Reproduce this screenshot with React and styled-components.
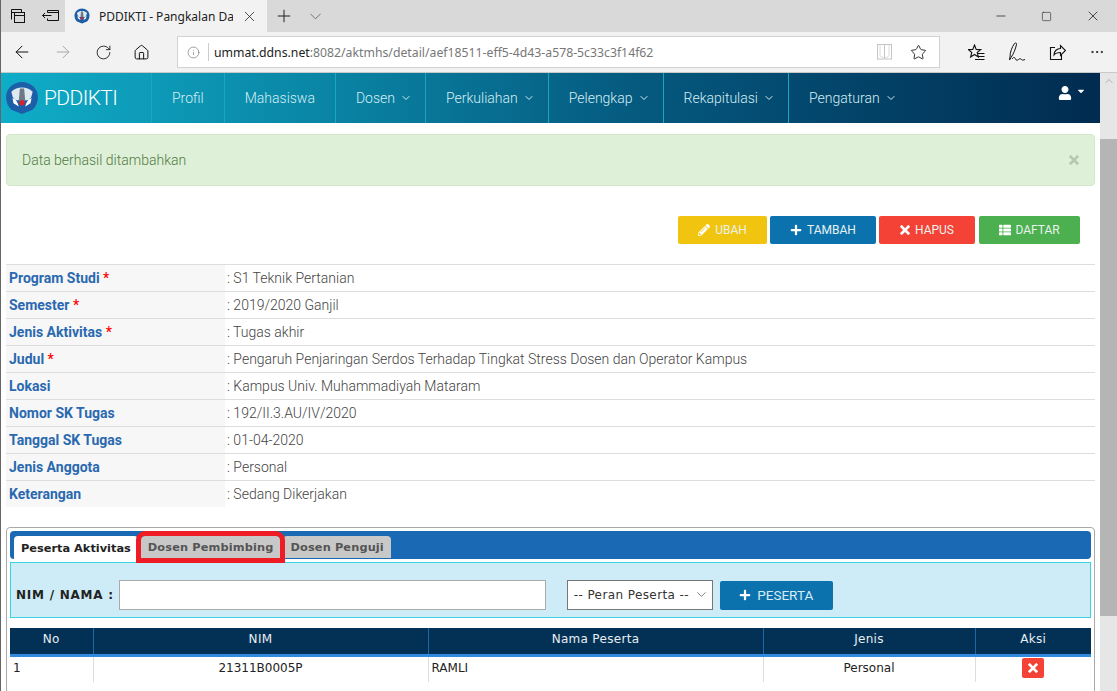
import React from 'react'
import styled, { createGlobalStyle } from 'styled-components'
import { FaPencilAlt, FaPlus, FaThList, FaUser, FaCaretDown } from 'react-icons/fa'
import { ImCross } from 'react-icons/im'
import {
  ArrowLeft, ArrowRight, RotateCw, Home, Info, X, Plus, ChevronDown, ChevronUp,
  Minus, Square, Star, MoreHorizontal,
} from 'lucide-react'

const GlobalStyle = createGlobalStyle`
  html, body { margin: 0; padding: 0; height: 691px; overflow: hidden; background: #fff; }
  * { box-sizing: border-box; }
`

const rows = [
  { label: 'Program Studi', req: true, value: 'S1 Teknik Pertanian' },
  { label: 'Semester', req: true, value: '2019/2020 Ganjil' },
  { label: 'Jenis Aktivitas', req: true, value: 'Tugas akhir' },
  { label: 'Judul', req: true, value: 'Pengaruh Penjaringan Serdos Terhadap Tingkat Stress Dosen dan Operator Kampus' },
  { label: 'Lokasi', value: 'Kampus Univ. Muhammadiyah Mataram' },
  { label: 'Nomor SK Tugas', value: '192/II.3.AU/IV/2020' },
  { label: 'Tanggal SK Tugas', value: '01-04-2020' },
  { label: 'Jenis Anggota', value: 'Personal' },
  { label: 'Keterangan', value: 'Sedang Dikerjakan' },
]

const menus = [
  { name: 'Profil' },
  { name: 'Mahasiswa' },
  { name: 'Dosen', drop: true },
  { name: 'Perkuliahan', drop: true },
  { name: 'Pelengkap', drop: true },
  { name: 'Rekapitulasi', drop: true },
  { name: 'Pengaturan', drop: true },
]

const Logo = ({ size }) => (
  <svg width={size} height={size} viewBox="0 0 32 32">
    <path d="M16 1c8 0 15 6 15 14 0 5-2 9-5 12l-10 4-10-4c-3-3-5-7-5-12C1 7 8 1 16 1z" fill="#1c5fa8" />
    <path d="M6 10c3-3 6-4 10-4s7 1 10 4l-2 8H8z" fill="#dfe9f1" />
    <path d="M3 14c4 0 7 3 9 8l4 3 4-3c2-5 5-8 9-8l-2 9-7 5H12l-7-5z" fill="#1c5fa8" />
    <path d="M7 16c3 1 5 4 6 8l-5-3zM25 16c-3 1-5 4-6 8l5-3z" fill="#fff" />
    <path d="M14 7h4l1 11h-6z" fill="#6d7a86" />
    <circle cx="16" cy="20.5" r="2.6" fill="#d8232a" />
  </svg>
)

const TabsIcon = () => (
  <svg width="16" height="16" viewBox="0 0 16 16" fill="none" stroke="#111" strokeWidth="1">
    <path d="M1.5 11.5v-10h10v3" />
    <path d="M1.5 4.5h3" />
    <rect x="4.5" y="4.5" width="10" height="10" />
    <path d="M4.5 7.5h10" />
  </svg>
)

const AsideIcon = () => (
  <svg width="17" height="14" viewBox="0 0 17 14" fill="none" stroke="#111" strokeWidth="1">
    <path d="M5.5 3.5v-2h11v10h-11v-2" />
    <path d="M5.5 3.5h11" />
    <path d="M0.5 6.5h9M3 4l-2.5 2.5L3 9" />
  </svg>
)

const BookIcon = () => (
  <svg width="15" height="16" viewBox="0 0 15 16" fill="none" stroke="#c4c4c4" strokeWidth="1">
    <rect x="0.5" y="0.5" width="14" height="14.5" />
    <path d="M7.5 0.5v14.5" />
    <path d="M3 0.5v11.500l4.500 2.500l4.500-2.500v-11.500" stroke="#dcdcdc" />
  </svg>
)

const FavoritesIcon = () => (
  <svg width="17" height="17" viewBox="0 0 17 17" fill="none" stroke="#111" strokeWidth="1.1">
    <path d="M6.500 1l1.700 4.400 4.500.2-3.500 2.900 1.200 4.500-3.900-2.500L2.600 13l1.200-4.500L.3 5.600l4.500-.2z" />
    <path d="M10 9.500h6.500M10 12.500h6.500M7 15.500h9.500" />
  </svg>
)

const PenIcon = () => (
  <svg width="18" height="20" viewBox="0 0 18 20" fill="none" stroke="#111" strokeWidth="1">
    <path d="M2 15c0-5 2-10 4.500-13.500 1-1 2.500-.5 2 1C7.500 7 5.500 12 3 15.500L1.500 18z" />
    <path d="M4 17c2-2.500 3-1.500 3.500 0s2 1.500 3 .5 2-1 3 0 2 .5 3.500 0" />
  </svg>
)

const ShareIcon = () => (
  <svg width="17" height="17" viewBox="0 0 17 17" fill="none" stroke="#111" strokeWidth="1.1">
    <path d="M6 3.500H1.500v12h11V11" />
    <path d="M5 11c0-4 3-6.500 6.500-6.500V1.500l5 5-5 5V8.500C9 8.500 6.500 9 5 11z" />
  </svg>
)

function App() {
  return (
    <Window>
      <GlobalStyle />
      <TabStrip>
        <StripIcon $w={34}><TabsIcon /></StripIcon>
        <StripIcon $w={30}><AsideIcon /></StripIcon>
        <BrowserTab>
          <Logo size={16} />
          <TabTitle>PDDIKTI - Pangkalan Da</TabTitle>
          <X size={17} strokeWidth={1.1} />
        </BrowserTab>
        <StripIcon $w={34}><Plus size={20} strokeWidth={1.1} /></StripIcon>
        <StripIcon $w={28}><ChevronDown size={19} strokeWidth={1} color="#555" /></StripIcon>
        <WindowControls>
          <Minus size={14} strokeWidth={1.2} />
          <Square size={11} strokeWidth={1.2} />
          <X size={16} strokeWidth={1.1} />
        </WindowControls>
      </TabStrip>

      <Toolbar>
        <NavIcons>
          <ArrowLeft size={20} strokeWidth={1.2} />
          <ArrowRight size={20} strokeWidth={1.2} color="#a8a8a8" />
          <RotateCw size={17} strokeWidth={1.2} />
          <Home size={17} strokeWidth={1.4} />
        </NavIcons>
        <Address>
          <Info size={13} strokeWidth={1.3} color="#777" />
          <AddressRule />
          <Url><b>ummat.ddns.net</b>:8082/aktmhs/detail/aef18511-eff5-4d43-a578-5c33c3f14f62</Url>
          <AddressEnd>
            <BookIcon />
            <Star size={17} strokeWidth={1.3} color="#222" />
          </AddressEnd>
        </Address>
        <ToolIcons>
          <FavoritesIcon />
          <PenIcon />
          <ShareIcon />
          <MoreHorizontal size={16} strokeWidth={1.3} />
        </ToolIcons>
      </Toolbar>

      <Viewport>
        <Page>
          <Navbar>
            <Brand>
              <Logo size={34} />
              <BrandName>PDDIKTI</BrandName>
            </Brand>
            {menus.map((m) => (
              <MenuItem key={m.name} $drop={m.drop}>
                {m.name}
                {m.drop && <ChevronDown size={12} strokeWidth={2} />}
              </MenuItem>
            ))}
            <UserMenu>
              <FaUser size={14} />
              <FaCaretDown size={10} />
            </UserMenu>
          </Navbar>

          <Content>
            <Alert>
              Data berhasil ditambahkan
              <ImCross size={10} color="#b8c6b2" />
            </Alert>

            <Actions>
              <ActionButton $bg="#f1c40f" $w={89}><FaPencilAlt size={12} />UBAH</ActionButton>
              <ActionButton $bg="#0b72ae" $w={106}><FaPlus size={12} />TAMBAH</ActionButton>
              <ActionButton $bg="#f44336" $w={96}><ImCross size={10} />HAPUS</ActionButton>
              <ActionButton $bg="#4caf50" $w={101} $gap={4}><FaThList size={12} />DAFTAR</ActionButton>
            </Actions>

            <Detail>
              {rows.map((r) => (
                <DetailRow key={r.label}>
                  <DetailLabel>
                    {r.label}
                    {r.req && <Req> *</Req>}
                  </DetailLabel>
                  <DetailValue>: {r.value}</DetailValue>
                </DetailRow>
              ))}
            </Detail>

            <Panel>
              <TabBar>
                <PanelTab $active>Peserta Aktivitas</PanelTab>
                <PanelTab $marked>Dosen Pembimbing</PanelTab>
                <PanelTab>Dosen Penguji</PanelTab>
              </TabBar>

              <Filter>
                <FilterLabel>NIM / NAMA :</FilterLabel>
                <SearchInput />
                <RoleSelect>
                  -- Peran Peserta --
                  <ChevronDown size={15} strokeWidth={1} />
                </RoleSelect>
                <AddButton><FaPlus size={12} />PESERTA</AddButton>
              </Filter>

              <Table>
                <thead>
                  <tr>
                    <Th $w={83}>No</Th>
                    <Th $w={335}>NIM</Th>
                    <Th $w={335}>Nama Peserta</Th>
                    <Th $w={212}>Jenis</Th>
                    <Th $w={116}>Aksi</Th>
                  </tr>
                </thead>
                <tbody>
                  <tr>
                    <Td>1</Td>
                    <Td $center>21311B0005P</Td>
                    <Td>RAMLI</Td>
                    <Td $center>Personal</Td>
                    <Td $center><DeleteButton><ImCross size={10} /></DeleteButton></Td>
                  </tr>
                </tbody>
              </Table>
            </Panel>
          </Content>
        </Page>

        <Scrollbar>
          <ScrollArrow><ChevronUp size={12} strokeWidth={1} /></ScrollArrow>
          <ScrollThumb />
        </Scrollbar>
      </Viewport>
    </Window>
  )
}

export default App

const Window = styled.div`
  width: 1117px;
  height: 691px;
  display: flex;
  flex-direction: column;
  overflow: hidden;
  border-left: 1px solid #666;
  font-family: Roboto, sans-serif;
`

const TabStrip = styled.div`
  height: 32px;
  flex: none;
  display: flex;
  align-items: center;
  background: #d9d9d9;
  color: #111;
`

const StripIcon = styled.div`
  width: ${(p) => p.$w}px;
  height: 32px;
  flex: none;
  display: flex;
  align-items: center;
  justify-content: center;
`

const BrowserTab = styled.div`
  width: 202px;
  height: 32px;
  flex: none;
  display: flex;
  align-items: center;
  padding: 0 9px;
  background: #f2f2f2;
  color: #222;
`

const TabTitle = styled.span`
  width: 134px;
  margin: 0 8px 0 9px;
  overflow: hidden;
  white-space: nowrap;
  font: 12px "Noto Sans", sans-serif;
`

const WindowControls = styled.div`
  margin-left: auto;
  width: 138px;
  padding: 0 16px 0 15px;
  display: flex;
  align-items: center;
  justify-content: space-between;
`

const Toolbar = styled.div`
  height: 41px;
  flex: none;
  display: flex;
  align-items: center;
  background: #f2f2f2;
  border-bottom: 1px solid #c9c9c9;
  color: #111;
`

const NavIcons = styled.div`
  width: 176px;
  flex: none;
  padding: 0 27px 0 11px;
  display: flex;
  align-items: center;
  justify-content: space-between;
`

const Address = styled.div`
  width: 763px;
  height: 32px;
  flex: none;
  display: flex;
  align-items: center;
  padding: 0 12px 0 9px;
  background: #fff;
  border: 1px solid #d2d2d2;
`

const AddressRule = styled.div`
  width: 1px;
  height: 18px;
  margin: 0 5px 0 8px;
  background: #ccc;
`

const Url = styled.span`
  font: 12.25px "Noto Sans", sans-serif;
  color: #777;
  white-space: nowrap;

  b {
    font-weight: 400;
    color: #222;
  }
`

const AddressEnd = styled.div`
  margin-left: auto;
  width: 50px;
  display: flex;
  align-items: center;
  justify-content: space-between;
`

const ToolIcons = styled.div`
  flex: 1;
  padding: 0 12px 0 28px;
  display: flex;
  align-items: center;
  justify-content: space-between;
`

const Viewport = styled.div`
  flex: 1;
  min-height: 0;
  display: flex;
`

const Page = styled.div`
  width: 1099px;
  flex: none;
  overflow: hidden;
`

const Navbar = styled.nav`
  height: 50px;
  display: flex;
  align-items: stretch;
  background: linear-gradient(90deg, #0fadc8 0%, #0a84a4 30%, #05597f 58%, #012b50 100%);
  color: #d4eef4;
`

const Brand = styled.div`
  width: 150px;
  flex: none;
  display: flex;
  align-items: center;
  padding-left: 4px;
  gap: 5px;
`

const BrandName = styled.span`
  font: 300 21px Roboto, sans-serif;
  letter-spacing: -0.6px;
  color: #fff;
`

const MenuItem = styled.div`
  display: flex;
  align-items: center;
  gap: 5px;
  padding: 0 ${(p) => (p.$drop ? 13 : 20)}px 0 20px;
  border-left: 1px solid #18a6c4;
  font: 300 14px Roboto, sans-serif;
  white-space: nowrap;
`

const UserMenu = styled.div`
  margin-left: auto;
  display: flex;
  align-items: flex-start;
  gap: 4px;
  padding: 13px 14px 0 0;
  color: #fff;
`

const Content = styled.main`
  padding: 11px 5px 0 5px;
`

const Alert = styled.div`
  height: 52px;
  display: flex;
  align-items: center;
  justify-content: space-between;
  padding: 0 15px 0 15px;
  background: #dff0d8;
  border: 1px solid #d2e7c8;
  border-radius: 4px;
  color: #4f7a42;
  font-size: 14px;
  font-weight: 300;
`

const Actions = styled.div`
  display: flex;
  justify-content: flex-end;
  gap: 3px;
  margin-top: 30px;
  padding-right: 15px;
`

const ActionButton = styled.div`
  width: ${(p) => p.$w}px;
  height: 28px;
  margin-left: ${(p) => (p.$gap ? 1 : 0)}px;
  display: flex;
  align-items: center;
  justify-content: center;
  gap: ${(p) => p.$gap || 5}px;
  border-radius: 2px;
  background: ${(p) => p.$bg};
  color: #e8f2ee;
  font-size: 12px;

  svg {
    color: #fff;
  }
`

const Detail = styled.div`
  margin-top: 20px;
  border-top: 1px solid #ddd;
`

const DetailRow = styled.div`
  height: 27px;
  display: flex;
  border-bottom: 1px solid #ddd;

  &:last-child {
    border-bottom-color: transparent;
  }
`

const DetailLabel = styled.div`
  width: 219px;
  flex: none;
  display: flex;
  align-items: center;
  padding-left: 3px;
  background: #f7f7f7;
  color: #2a69b0;
  font-size: 14px;
  font-weight: 700;
  white-space: pre;
`

const Req = styled.span`
  color: #f00;
  font-weight: 500;
`

const DetailValue = styled.div`
  display: flex;
  align-items: center;
  padding-left: 2px;
  color: #444;
  font-size: 14px;
  font-weight: 300;
  white-space: pre;
`

const Panel = styled.section`
  margin-top: 19px;
  padding: 3px;
  height: 170px;
  border: 1px solid #aaa;
  border-radius: 4px;
  font-family: "DejaVu Sans", sans-serif;
`

const TabBar = styled.div`
  height: 28px;
  display: flex;
  align-items: flex-end;
  gap: 3px;
  padding: 0 0 0 4px;
  background: #1a69b5;
  border-radius: 4px;
`

const PanelTab = styled.div`
  height: ${(p) => (p.$active ? 23 : 22)}px;
  display: flex;
  align-items: center;
  padding: 0 7px;
  margin-bottom: ${(p) => (p.$active ? 0 : 1)}px;
  border-radius: 4px 4px 0 0;
  background: ${(p) => (p.$active ? '#fff' : '#c8c8c8')};
  color: ${(p) => (p.$active ? '#222' : '#555')};
  font-size: 11.35px;
  font-weight: 700;
  letter-spacing: ${(p) => (p.$active ? 0 : 0.13)}px;
  white-space: nowrap;
  ${(p) => p.$marked && 'outline: 5px solid #ee1c25; z-index: 1;'}
`

const Filter = styled.div`
  height: 56px;
  margin-top: 3px;
  display: flex;
  align-items: center;
  padding: 9px 5px 0;
  background: #cdecf7;
  border: 1px solid #3ad3e0;
`

const FilterLabel = styled.span`
  color: #222;
  font-size: 12px;
  font-weight: 700;
  letter-spacing: 0.75px;
  white-space: nowrap;
`

const SearchInput = styled.input`
  width: 427px;
  height: 30px;
  margin-left: 5px;
  background: #fff;
  border: 1px solid #aaa;
  outline: none;
`

const RoleSelect = styled.div`
  width: 146px;
  height: 30px;
  margin-left: 21px;
  display: flex;
  align-items: center;
  justify-content: space-between;
  padding: 0 3px 0 6px;
  background: #fff;
  border: 1px solid #777;
  color: #333;
  font-size: 12px;
  letter-spacing: 0.4px;
  white-space: nowrap;
`

const AddButton = styled.div`
  width: 113px;
  height: 29px;
  margin: 1px 0 0 7px;
  display: flex;
  align-items: center;
  justify-content: center;
  gap: 6px;
  background: #0b72ae;
  border-radius: 2px;
  color: #d8ecf5;
  font: 13.5px Roboto, sans-serif;

  svg {
    color: #fff;
  }
`

const Table = styled.table`
  width: 1081px;
  margin-top: 10px;
  border-collapse: collapse;
  table-layout: fixed;
  font-size: 12px;
`

const Th = styled.th`
  width: ${(p) => p.$w}px;
  height: 27px;
  padding: 0 0 3px;
  background: #033155;
  border-bottom: 3px solid #2f8ae0;
  border-left: 1px solid #1a69a8;
  color: #e8eef2;
  font-weight: 400;
  letter-spacing: 0.3px;

  &:first-child {
    border-left: 0;
  }
`

const Td = styled.td`
  height: 27px;
  padding: 0 3px 2px;
  border-left: 1px solid #ddd;
  color: #222;
  text-align: ${(p) => (p.$center ? 'center' : 'left')};

  &:first-child {
    border-left: 0;
  }
`

const DeleteButton = styled.span`
  width: 22px;
  height: 20px;
  display: inline-flex;
  align-items: center;
  justify-content: center;
  vertical-align: middle;
  background: #f44336;
  border-radius: 2px;
  color: #fff;
`

const Scrollbar = styled.aside`
  flex: 1;
  display: flex;
  flex-direction: column;
  background: #e6e6e6;
`

const ScrollArrow = styled.div`
  height: 66px;
  display: flex;
  justify-content: center;
  padding-top: 2px;
  color: #777;
`

const ScrollThumb = styled.div`
  height: 477px;
  background: #b5b5b5;
`
